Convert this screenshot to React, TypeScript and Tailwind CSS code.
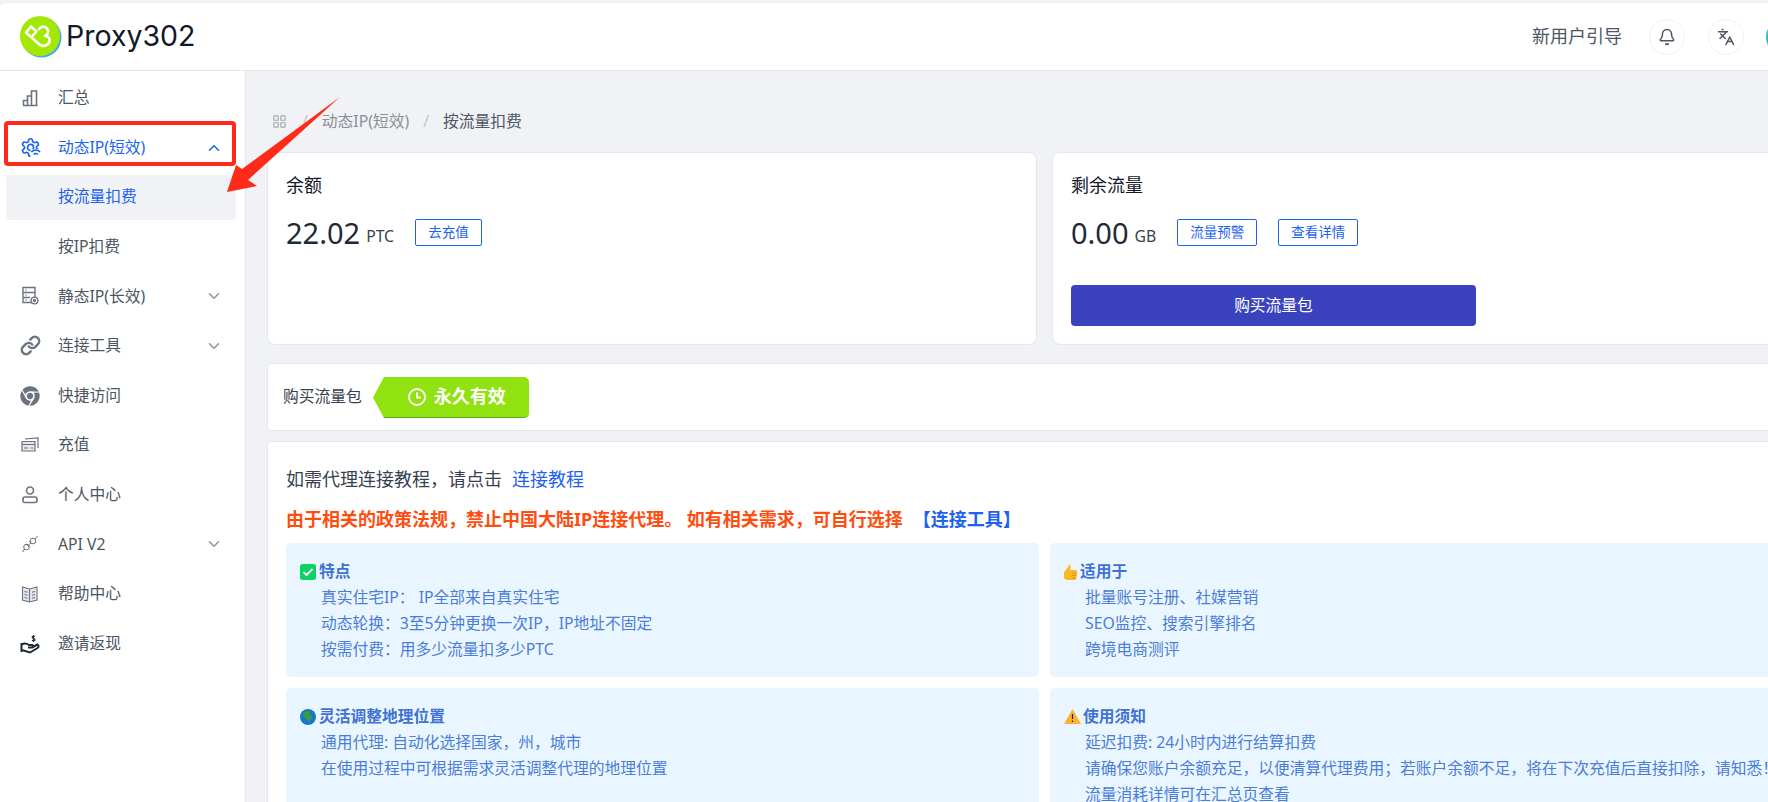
import React from "react";
import { ChevronDown, ChevronUp, Bell, Languages, LayoutGrid, Link as LinkIcon } from "lucide-react";
import { FaChrome } from "react-icons/fa";

const Logo = () => (
  <svg width="42" height="42" viewBox="0 0 42 42" className="shrink-0">
    <circle cx="21.500" cy="21.500" r="20" fill="#4aa8f5" />
    <circle cx="20" cy="20" r="20" fill="#a2e800" />
    <path d="M19 13 C21 9.500 27 10 28 14.500 C28.500 17 27 19 25 20 C28 20 30 22 29.500 25 C29 29 24 31 20 29 L6 16.500 L11 10.500 L16.500 15.500 L12 20.500" fill="none" stroke="#fff" strokeWidth="2.600" strokeLinejoin="round" strokeLinecap="round" />
  </svg>
);

const I = ({ children, cls = "text-[#6b7280]", sw = 1.4 }: { children: React.ReactNode; cls?: string; sw?: number }) => (
  <svg width="20" height="20" viewBox="0 0 20 20" fill="none" stroke="currentColor" strokeWidth={sw} className={cls}>{children}</svg>
);

const icons: Record<string, React.ReactNode> = {
  chart: <I sw={1.6}><path d="M3 17.500h14.500M3.500 17.500v-5h4v5M7.500 17.500V8h4v9.500M11.500 17.500V3h5v14.500" /></I>,
  gear: (
    <svg width="21" height="21" viewBox="0 0 24 24" fill="none" stroke="currentColor" strokeWidth="1.900" className="text-[#1d62f0]">
      <path d="M12.220 2h-.44a2 2 0 0 0-2 2v.18a2 2 0 0 1-1 1.730l-.43.25a2 2 0 0 1-2 0l-.15-.08a2 2 0 0 0-2.730.73l-.22.38a2 2 0 0 0 .73 2.730l.15.1a2 2 0 0 1 1 1.720v.51a2 2 0 0 1-1 1.740l-.15.09a2 2 0 0 0-.73 2.730l.22.38a2 2 0 0 0 2.730.73l.15-.08a2 2 0 0 1 2 0l.43.25a2 2 0 0 1 1 1.730V20a2 2 0 0 0 2 2h.44a2 2 0 0 0 2-2v-.18a2 2 0 0 1 1-1.730l.43-.25a2 2 0 0 1 2 0l.15.08a2 2 0 0 0 2.730-.73l.22-.39a2 2 0 0 0-.73-2.730l-.15-.08a2 2 0 0 1-1-1.740v-.5a2 2 0 0 1 1-1.740l.15-.09a2 2 0 0 0 .73-2.730l-.22-.38a2 2 0 0 0-2.730-.73l-.15.08a2 2 0 0 1-2 0l-.43-.25a2 2 0 0 1-1-1.730V4a2 2 0 0 0-2-2z" />
      <circle cx="12" cy="12" r="3.500" />
      <rect x="12" y="14" width="12" height="10" fill="#fff" stroke="none" />
      <path d="M13 17c3-2.500 7-2.500 10 0M15.500 20c1.500-1.300 3.500-1.300 5 0" strokeWidth="1.800" />
      <path d="M18 22.500h.1" strokeWidth="2" />
    </svg>
  ),
  server: <I><path d="M3 1.500h12v15H3zM3 6.500h12M3 11.500h7" /><path d="M5.500 4h1M5.500 9h1M5.500 14h1" /><circle cx="14.500" cy="14.500" r="3.400" fill="#fff" /><circle cx="14.500" cy="14.500" r="1" /></I>,
  link: <LinkIcon size={21} strokeWidth={2.800} className="text-[#6b7280]" />,
  chrome: <FaChrome size={20} className="text-[#6b7280]" />,
  card: <I sw={1.200}><path d="M2 6.500h13V16H2z" fill="#e5e7eb" /><path d="M2 9.500h13M4 13h4M11 13h2" /><path d="M5 4l13-1v10" /></I>,
  user: <I sw={1.600}><circle cx="10" cy="5.500" r="3.500" /><rect x="3" y="12" width="14" height="5.500" rx="2" /></I>,
  api: <I sw={1}><circle cx="6.500" cy="13" r="2.800" /><circle cx="13" cy="7" r="2.800" /><path d="M8.500 11l2.500-2M2.500 18l2-3M17.500 2l-2.500 3M9 7l2 2M6 10l3 3" /></I>,
  book: <I sw={1.100}><path d="M2.500 3l7 2 7.500-2v13l-7.500 2-7-2z" fill="#e5e7eb" /><path d="M9.500 5v13M4.500 7.500l3 .8M4.500 10.500l3 .8M4.500 13.500l3 .8M12 8.300l3-.8M12 11.300l3-.8M12 14.300l3-.8" /></I>,
  hand: <I cls="text-[#1f2937]" sw={2}><path d="M1.500 9v9M2 10.500c3-2 5-1 7 .5h3.500c1.500 1 .5 2.500-1 2.500H8M12 13.500l5.500-3c1.500 1 1.500 2.500 0 3.500l-7.500 4.500-8-2.500" /><path d="M14.800 2.500c-1.800-.9-3.300.2-2.300 1.300s2.900.6 2.500 2-2 1-3 .4M13.500 1v7" strokeWidth="1.100" /></I>,
};

const MenuItem = ({ icon, label, arrow, active, selected }: { icon?: string; label: string; arrow?: "up" | "down"; active?: boolean; selected?: boolean }) => (
  <div className={`h-[45px] mb-[4.600px] ml-[6px] mr-[9px] rounded-[3px] flex items-center text-[15.750px] ${selected ? "bg-[#f0f2f5]" : ""} ${active || selected ? "text-[#1d62f0]" : "text-[#4b5563]"}`}>
    <span className="w-[52px] pl-[14px] flex items-center shrink-0">{icon ? icons[icon] : null}</span>
    <span className="flex-1">{label}</span>
    {arrow === "up" && <ChevronUp size={18} className="mr-[13px] text-[#1d62f0]" />}
    {arrow === "down" && <ChevronDown size={18} className="mr-[13px] text-[#8b93a1]" />}
  </div>
);

const OutlineBtn = ({ children, w }: { children: React.ReactNode; w: string }) => (
  <span className={`${w} h-[27px] border border-[#1d62f0] rounded-[2px] text-[#1d62f0] text-[13.500px] flex items-center justify-center shrink-0`}>{children}</span>
);

const Check = () => (
  <svg width="16" height="16" viewBox="0 0 16 16" className="shrink-0">
    <rect width="16" height="16" rx="2.500" fill="#0bd265" />
    <path d="M3.500 8.200l3 2.800 6-6" fill="none" stroke="#fff" strokeWidth="1.800" />
  </svg>
);
const Globe = () => (
  <svg width="16" height="16" viewBox="0 0 16 16" className="shrink-0">
    <circle cx="8" cy="8" r="8" fill="#1677c9" />
    <path d="M4 3l4-1 2 1-1 2 2 1 1 3-2 2-1 3-1-3-2-1-1-2-2-1z" fill="#3f9b3a" />
  </svg>
);
const Thumb = () => (
  <svg width="13" height="16" viewBox="0 0 13 16" className="shrink-0">
    <path d="M5 0.500c1.500 0 1.800 1.500 1.500 3L6 6h5.500c1.500 0 1.500 2 1.500 3l-.8 5.500c-.2 1-1 1.500-2 1.500H4c-2.500 0-4-1-4-2.500V8.500C0 7 3.800 5 5 0.500z" fill="#fbb726" />
    <path d="M8 9h5M8 11.500h4.500M8 14h4" stroke="#e8950e" strokeWidth="1" />
  </svg>
);
const Warn = () => (
  <svg width="17" height="15" viewBox="0 0 17 15" className="shrink-0">
    <path d="M8.500 0L17 15H0z" fill="#ffb02e" />
    <path d="M8.500 5v5M8.500 11.500v1.500" stroke="#222" strokeWidth="1.200" />
  </svg>
);

const InfoCard = ({ icon, title, lines, gap }: { icon: React.ReactNode; title: string; lines: string[]; gap: string }) => (
  <div className="h-[134px] rounded-[5px] bg-[#eaf6ff] pl-[14px] pt-[16px] text-[15.750px] text-[#4a7dd8]">
    <div className={`flex items-center h-[25px] font-semibold text-[#3f72d2] ${gap}`}>{icon}<span>{title}</span></div>
    <div className="pl-[21px]">
      {lines.map((l) => (
        <div key={l} className="h-[26px] leading-[26px] whitespace-nowrap">{l}</div>
      ))}
    </div>
  </div>
);

export default function App() {
  return (
    <div className="w-[1768px] h-[802px] overflow-hidden relative bg-[#f0f2f5] pt-[3px] font-['Noto_Sans','Noto_Sans_CJK_SC',sans-serif]">
      <header className="h-[68px] bg-white border-b border-[#e5e7eb] rounded-tl-[6px] flex items-center">
        <div className="ml-[20px] flex items-center gap-[4px]">
          <Logo />
          <span className="text-[28.500px] text-[#111827] font-['Inter','Noto_Sans',sans-serif] tracking-[0px]">Proxy302</span>
        </div>
        <div className="ml-auto flex items-center relative">
          <span className="text-[18px] text-[#4b5563] mr-[27px]">新用户引导</span>
          <span className="w-[36px] h-[36px] rounded-full border border-[#f0f1f3] flex items-center justify-center text-[#4b5563] mr-[23px]"><Bell size={18} /></span>
          <span className="w-[36px] h-[36px] rounded-full border border-[#f0f1f3] flex items-center justify-center text-[#4b5563] mr-[22px]"><Languages size={18} /></span>
          <span className="w-[36px] h-[36px] rounded-full bg-[#1fc7b6] -mr-[34px]" />
        </div>
      </header>
      <div className="flex h-[731px]">
        <aside className="w-[246px] shrink-0 bg-white border-r border-[#e5e7eb] pt-[4.500px]">
          <MenuItem icon="chart" label="汇总" />
          <MenuItem icon="gear" label="动态IP(短效)" arrow="up" active />
          <MenuItem label="按流量扣费" selected />
          <MenuItem label="按IP扣费" />
          <MenuItem icon="server" label="静态IP(长效)" arrow="down" />
          <MenuItem icon="link" label="连接工具" arrow="down" />
          <MenuItem icon="chrome" label="快捷访问" />
          <MenuItem icon="card" label="充值" />
          <MenuItem icon="user" label="个人中心" />
          <MenuItem icon="api" label="API V2" arrow="down" />
          <MenuItem icon="book" label="帮助中心" />
          <MenuItem icon="hand" label="邀请返现" />
        </aside>
        <main className="flex-1 min-w-0 overflow-hidden pl-[21px]">
          <div className="w-[1560px]">
            <div className="h-[81px] flex items-center pt-[20px] text-[15.750px] text-[#8c8f96]">
              <LayoutGrid size={15} className="ml-[5px] text-[#a3a8b0]" strokeWidth={1.800} />
              <span className="ml-[15px] mr-[14px] text-[#c4c7cc]">/</span>
              <span>动态IP(短效)</span>
              <span className="mx-[14px] text-[#c4c7cc]">/</span>
              <span className="text-[#4b5563]">按流量扣费</span>
            </div>
            <div className="grid grid-cols-[770px_770px] gap-[15px]">
              <div className="h-[193px] bg-white border border-[#e5e7eb] rounded-[8px] pl-[18px] pt-[19px]">
                <div className="text-[18px] text-[#111827] leading-[26px]">余额</div>
                <div className="flex items-center mt-[21px] h-[27px]">
                  <span className="text-[29px] text-[#1f2937]">22.02</span>
                  <span className="ml-[6px] mr-[21px] mt-[8px] text-[15.750px] text-[#374151]">PTC</span>
                  <OutlineBtn w="w-[67px]">去充值</OutlineBtn>
                </div>
              </div>
              <div className="h-[193px] bg-white border border-[#e5e7eb] rounded-[8px] pl-[18px] pt-[19px]">
                <div className="text-[18px] text-[#111827] leading-[26px]">剩余流量</div>
                <div className="flex items-center mt-[21px] h-[27px]">
                  <span className="text-[29px] text-[#1f2937]">0.00</span>
                  <span className="ml-[6px] mr-[21px] mt-[8px] text-[15.750px] text-[#374151]">GB</span>
                  <OutlineBtn w="w-[80px]">流量预警</OutlineBtn>
                  <span className="w-[21px]" />
                  <OutlineBtn w="w-[80px]">查看详情</OutlineBtn>
                </div>
                <div className="mt-[39px] w-[405px] h-[41px] rounded-[4px] bg-[#3a43bd] text-white text-[15.750px] flex items-center justify-center">购买流量包</div>
              </div>
            </div>
            <div className="mt-[18px] h-[68px] bg-white border border-[#e5e7eb] rounded-[4px] flex items-center pl-[15px]">
              <span className="text-[15.750px] text-[#374151]">购买流量包</span>
              <span className="ml-[11px] flex items-stretch h-[41px]">
                <svg width="11" height="41" viewBox="0 0 11 41" className="shrink-0"><path d="M11 0v41L0 20.500z" fill="#90e210" /></svg>
                <span className="w-[145px] bg-[#90e210] border-b border-[#5cb011] rounded-r-[5px] flex items-center pl-[24px] gap-[8px] text-white text-[18px] font-bold">
                  <svg width="18" height="18" viewBox="0 0 18 18" fill="none" stroke="#fff" strokeWidth="1.800"><circle cx="9" cy="9" r="8" /><path d="M9 4.500V9.500H13" /></svg>
                  永久有效
                </span>
              </span>
            </div>
            <div className="mt-[10px] bg-white border border-[#e5e7eb] rounded-[4px] pl-[18px] pt-[23px] h-[400px]">
              <div className="text-[18px] leading-[28px] text-[#374151]">如需代理连接教程，请点击<span className="ml-[10px] text-[#1d62f0]">连接教程</span></div>
              <div className="mt-[12px] text-[18px] leading-[28px] font-bold text-[#ff4d0f]">由于相关的政策法规，禁止中国大陆IP连接代理。 如有相关需求，可自行选择<span className="ml-[10px] text-[#1d62f0]">【连接工具】</span></div>
              <div className="mt-[10px] grid grid-cols-[753px_753px] gap-x-[11px] gap-y-[11px]">
                <InfoCard icon={<Check />} title="特点" gap="gap-[3px]" lines={["真实住宅IP： IP全部来自真实住宅", "动态轮换：3至5分钟更换一次IP，IP地址不固定", "按需付费：用多少流量扣多少PTC"]} />
                <InfoCard icon={<Thumb />} title="适用于" gap="gap-[3px]" lines={["批量账号注册、社媒营销", "SEO监控、搜索引擎排名", "跨境电商测评"]} />
                <InfoCard icon={<Globe />} title="灵活调整地理位置" gap="gap-[3px]" lines={["通用代理: 自动化选择国家，州，城市", "在使用过程中可根据需求灵活调整代理的地理位置"]} />
                <InfoCard icon={<Warn />} title="使用须知" gap="gap-[2px]" lines={["延迟扣费: 24小时内进行结算扣费", "请确保您账户余额充足，以便清算代理费用；若账户余额不足，将在下次充值后直接扣除，请知悉！", "流量消耗详情可在汇总页查看"]} />
              </div>
            </div>
          </div>
        </main>
      </div>
      <div className="absolute left-[4px] top-[121px] w-[232px] h-[45px] border-[4px] border-[#ff2a1a] rounded-[4px] pointer-events-none" />
      <svg className="absolute left-0 top-0 pointer-events-none" width="360" height="210" viewBox="0 0 360 210">
        <path d="M340 97 L242 169 L236 165 L227 192 L257 186 L248 180 Z" fill="#ff2a1a" />
      </svg>
    </div>
  );
}
